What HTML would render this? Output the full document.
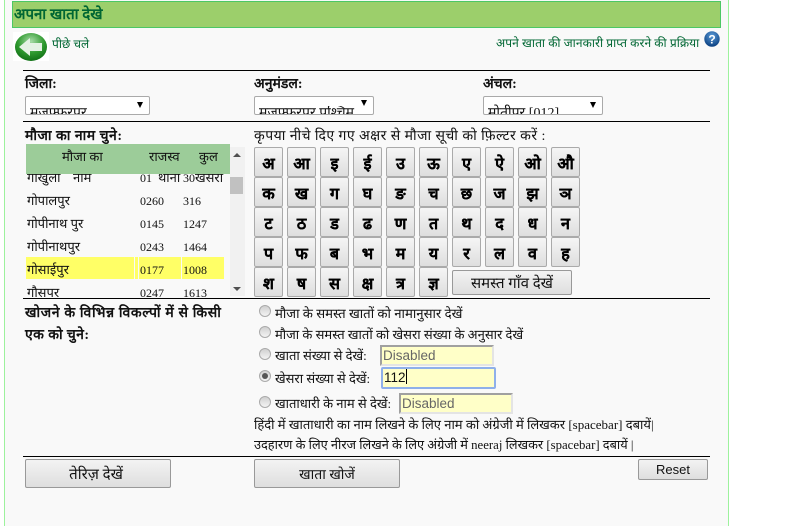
<!DOCTYPE html>
<html><head><meta charset="utf-8">
<style>
html,body{margin:0;padding:0;background:#fff;width:789px;height:526px;overflow:hidden}
body{position:relative;font-family:"Liberation Serif","Noto Serif CJK SC",serif;color:#111}
.a,.t{position:absolute;white-space:nowrap}
.t{font-size:13px;line-height:16px}
.n{font-size:12px}
.b{font-weight:bold}
.ln{position:absolute;left:23px;width:687px;height:1px;background:#000}
.sel{position:absolute;height:19px;background:#fff;border:1px solid #aaa;border-radius:2px;box-sizing:border-box;overflow:hidden;font-size:14px;line-height:16px;padding:9px 0 0 4px;white-space:nowrap}
.sel i{position:absolute;right:6px;top:5px;width:0;height:0;border-left:3px solid transparent;border-right:3px solid transparent;border-top:6px solid #000}
.k{position:absolute;width:29px;height:30px;box-sizing:border-box;border:1px solid #aaa;border-radius:2px;background:linear-gradient(#f5f5f5,#dedede);text-align:center;font:bold 16px/33px "Liberation Serif",serif;color:#000;-webkit-text-stroke:.25px #000}
.btn{position:absolute;box-sizing:border-box;border:1px solid #999;border-radius:2px;background:linear-gradient(#f3f3f3,#dedede);text-align:center;color:#111;font-size:14px}
.rad{position:absolute;width:12px;height:12px;box-sizing:border-box;border-radius:50%;border:1px solid #aaa;background:linear-gradient(#d0d0d0,#f4f4f4)}
.inp{position:absolute;box-sizing:border-box;background:#ffffc8;border:2px solid #a0a0a0;border-right-color:#e4e4e4;border-bottom-color:#e4e4e4;color:#666;font:13.5px/17px "Liberation Sans",sans-serif;padding-left:1px}
</style></head><body>
<div class="a" style="left:4px;top:0;width:725px;height:526px;box-sizing:border-box;background:#f9f9f9;border-left:1px solid #9df29d;border-right:1px solid #9df29d"></div>
<div class="a" style="left:12px;top:1px;width:709px;height:27px;box-sizing:border-box;background:#9ccf6b;border:1px solid #4cc765;font:bold 15px/27px 'Liberation Serif',serif;color:#063;padding-left:1px">अपना खाता देखे</div>
<svg class="a" style="left:13px;top:32px" width="36" height="29" viewBox="0 0 36 29"><defs><radialGradient id="g" cx=".5" cy=".3" r=".75"><stop offset="0" stop-color="#a8dca8"/><stop offset=".55" stop-color="#2f9a2f"/><stop offset="1" stop-color="#0c6a12"/></radialGradient></defs><rect width="36" height="29" fill="#fff"/><ellipse cx="18" cy="15" rx="16" ry="14" fill="url(#g)"/><path d="M6 15 L17 6 V11 H29 V19 H17 V24 Z" fill="#e4f2e4"/></svg>
<div class="t" style="left:52px;top:36px;font-size:12px;color:#063">पीछे चले</div>
<div class="t" style="left:496px;top:35px;font-size:12px;letter-spacing:.1px;color:#063">अपने खाता की जानकारी प्राप्त करने की प्रक्रिया</div>
<svg class="a" style="left:704px;top:31px" width="16" height="16" viewBox="0 0 16 16"><defs><radialGradient id="h" cx=".5" cy=".3" r=".7"><stop offset="0" stop-color="#5b9bd8"/><stop offset="1" stop-color="#0a3f80"/></radialGradient></defs><circle cx="8" cy="8" r="7.7" fill="url(#h)"/><text x="8" y="12.5" text-anchor="middle" fill="#fff" font-family="Liberation Sans" font-weight="bold" font-size="12">?</text></svg>

<div class="ln" style="top:70px"></div>
<div class="t b" style="left:25px;top:77px;font-size:14px">जिला:</div>
<div class="t b" style="left:254px;top:77px;font-size:14px">अनुमंडल:</div>
<div class="t b" style="left:483px;top:77px;font-size:14px">अंचल:</div>
<div class="sel" style="left:25px;top:96px;width:125px">मुजफ्फरपुर<i></i></div>
<div class="sel" style="left:254px;top:96px;width:120px"><span style="display:inline-block;width:97px;overflow:hidden;vertical-align:top">मुजफ्फरपुर पश्चिम</span><i style="top:3px"></i></div>
<div class="sel" style="left:483px;top:96px;width:120px">मोतीपुर [012]<i></i></div>
<div class="ln" style="top:121px"></div>

<div class="t b" style="left:25px;top:129px;font-size:14px;letter-spacing:.5px">मौजा का नाम चुने:</div>
<div class="t" style="left:254px;top:129px;font-size:14px;letter-spacing:.45px">कृपया नीचे दिए गए अक्षर से मौजा सूची को फ़िल्टर करें :</div>

<div class="a" style="left:230px;top:147px;width:15px;height:149px;background:#f1f1f1"></div>
<div class="a" style="left:230px;top:177px;width:13px;height:17px;background:#c1c1c1"></div>
<div class="a" style="left:233px;top:153px;border-left:4px solid transparent;border-right:4px solid transparent;border-bottom:4px solid #505050"></div>
<div class="a" style="left:233px;top:287px;border-left:4px solid transparent;border-right:4px solid transparent;border-top:4px solid #505050"></div>

<div class="t" style="left:27px;top:170px">गोखुला</div><div class="t" style="left:73px;top:170px">नाम</div>
<div class="t n" style="left:140px;top:170px">01</div><div class="t" style="left:158px;top:170px">थाना</div><div class="t n" style="left:183px;top:170px">30</div><div class="t" style="left:195px;top:170px">खेसरा</div>
<div class="t" style="left:27px;top:193px">गोपालपुर</div><div class="t n" style="left:140px;top:193px">0260</div><div class="t n" style="left:183px;top:193px">316</div>
<div class="t" style="left:27px;top:216px">गोपीनाथ पुर</div><div class="t n" style="left:140px;top:216px">0145</div><div class="t n" style="left:183px;top:216px">1247</div>
<div class="t" style="left:27px;top:239px">गोपीनाथपुर</div><div class="t n" style="left:140px;top:239px">0243</div><div class="t n" style="left:183px;top:239px">1464</div>
<div class="a" style="left:26px;top:257px;width:108px;height:22px;background:#ffff66"></div>
<div class="a" style="left:135px;top:257px;width:3px;height:22px;background:#ffff66"></div>
<div class="a" style="left:139px;top:257px;width:42px;height:22px;background:#ffff66"></div>
<div class="a" style="left:182px;top:257px;width:42px;height:22px;background:#ffff66"></div>
<div class="t" style="left:27px;top:262px">गोसाईपुर</div><div class="t n" style="left:140px;top:262px">0177</div><div class="t n" style="left:183px;top:262px">1008</div>
<div class="t" style="left:27px;top:285px">गौसपर</div><div class="t n" style="left:140px;top:285px">0247</div><div class="t n" style="left:183px;top:285px">1613</div>
<div class="a" style="left:26px;top:144px;width:204px;height:30px;background:#9ccc99"></div>
<div class="t" style="left:62px;top:149px">मौजा का</div>
<div class="t" style="left:149px;top:149px">राजस्व</div>
<div class="t" style="left:199px;top:149px">कुल</div>

<div class="k" style="left:254px;top:147px">अ</div><div class="k" style="left:287px;top:147px">आ</div><div class="k" style="left:320px;top:147px">इ</div><div class="k" style="left:353px;top:147px">ई</div><div class="k" style="left:386px;top:147px">उ</div><div class="k" style="left:419px;top:147px">ऊ</div><div class="k" style="left:452px;top:147px">ए</div><div class="k" style="left:485px;top:147px">ऐ</div><div class="k" style="left:518px;top:147px">ओ</div><div class="k" style="left:551px;top:147px">औ</div>
<div class="k" style="left:254px;top:177px">क</div><div class="k" style="left:287px;top:177px">ख</div><div class="k" style="left:320px;top:177px">ग</div><div class="k" style="left:353px;top:177px">घ</div><div class="k" style="left:386px;top:177px">ङ</div><div class="k" style="left:419px;top:177px">च</div><div class="k" style="left:452px;top:177px">छ</div><div class="k" style="left:485px;top:177px">ज</div><div class="k" style="left:518px;top:177px">झ</div><div class="k" style="left:551px;top:177px">ञ</div>
<div class="k" style="left:254px;top:207px">ट</div><div class="k" style="left:287px;top:207px">ठ</div><div class="k" style="left:320px;top:207px">ड</div><div class="k" style="left:353px;top:207px">ढ</div><div class="k" style="left:386px;top:207px">ण</div><div class="k" style="left:419px;top:207px">त</div><div class="k" style="left:452px;top:207px">थ</div><div class="k" style="left:485px;top:207px">द</div><div class="k" style="left:518px;top:207px">ध</div><div class="k" style="left:551px;top:207px">न</div>
<div class="k" style="left:254px;top:237px">प</div><div class="k" style="left:287px;top:237px">फ</div><div class="k" style="left:320px;top:237px">ब</div><div class="k" style="left:353px;top:237px">भ</div><div class="k" style="left:386px;top:237px">म</div><div class="k" style="left:419px;top:237px">य</div><div class="k" style="left:452px;top:237px">र</div><div class="k" style="left:485px;top:237px">ल</div><div class="k" style="left:518px;top:237px">व</div><div class="k" style="left:551px;top:237px">ह</div>
<div class="k" style="left:254px;top:267px">श</div><div class="k" style="left:287px;top:267px">ष</div><div class="k" style="left:320px;top:267px">स</div><div class="k" style="left:353px;top:267px">क्ष</div><div class="k" style="left:386px;top:267px">त्र</div><div class="k" style="left:419px;top:267px">ज्ञ</div>
<div class="btn" style="left:452px;top:270px;width:120px;height:25px;line-height:27px;font-size:15px">समस्त गाँव देखें</div>

<div class="ln" style="top:298px"></div>
<div class="t b" style="left:25px;top:306px;font-size:14px;letter-spacing:.65px">खोजने के विभिन्न विकल्पों में से किसी</div>
<div class="t b" style="left:25px;top:328px;font-size:14px;letter-spacing:.4px">एक को चुने:</div>

<div class="rad" style="left:259px;top:305px"></div><div class="t" style="left:275px;top:306px;font-size:13.2px">मौजा के समस्त खातों को नामानुसार देखें</div>
<div class="rad" style="left:259px;top:326px"></div><div class="t" style="left:275px;top:327px">मौजा के समस्त खातों को खेसरा संख्या के अनुसार देखें</div>
<div class="rad" style="left:259px;top:348px"></div><div class="t" style="left:275px;top:348px">खाता संख्या से देखें:</div>
<div class="inp" style="left:380px;top:345px;width:114px;height:21px">Disabled</div>
<div class="rad" style="left:259px;top:370px"></div><div class="a" style="left:262px;top:373px;width:6px;height:6px;border-radius:50%;background:#555"></div><div class="t" style="left:275px;top:371px">खेसरा संख्या से देखें:</div>
<div class="a" style="left:381px;top:367px;width:115px;height:22px;box-sizing:border-box;background:#ffffc8;border:2px solid #8fb0ea;border-radius:2px;font:13.5px/18px 'Liberation Sans',sans-serif;color:#111;padding-left:1px">112<span style="display:inline-block;width:1px;height:15px;background:#000;vertical-align:-2px"></span></div>
<div class="rad" style="left:259px;top:396px"></div><div class="t" style="left:275px;top:396px">खाताधारी के नाम से देखें:</div>
<div class="inp" style="left:399px;top:393px;width:114px;height:21px">Disabled</div>
<div class="t" style="left:254px;top:417px">हिंदी में खाताधारी का नाम लिखने के लिए नाम को अंग्रेजी में लिखकर [spacebar] दबायें|</div>
<div class="t" style="left:254px;top:437px;font-size:12.8px">उदहारण के लिए नीरज लिखने के लिए अंग्रेजी में neeraj लिखकर [spacebar] दबायें |</div>
<div class="ln" style="top:456px"></div>

<div class="btn" style="left:25px;top:459px;width:146px;height:29px;line-height:31px;font-size:15px;padding-right:4px">तेरिज़ देखें</div>
<div class="btn" style="left:254px;top:459px;width:146px;height:29px;line-height:31px">खाता खोजें</div>
<div class="btn" style="left:638px;top:459px;width:70px;height:21px;font:13px/19px 'Liberation Sans',sans-serif">Reset</div>
</body></html>
